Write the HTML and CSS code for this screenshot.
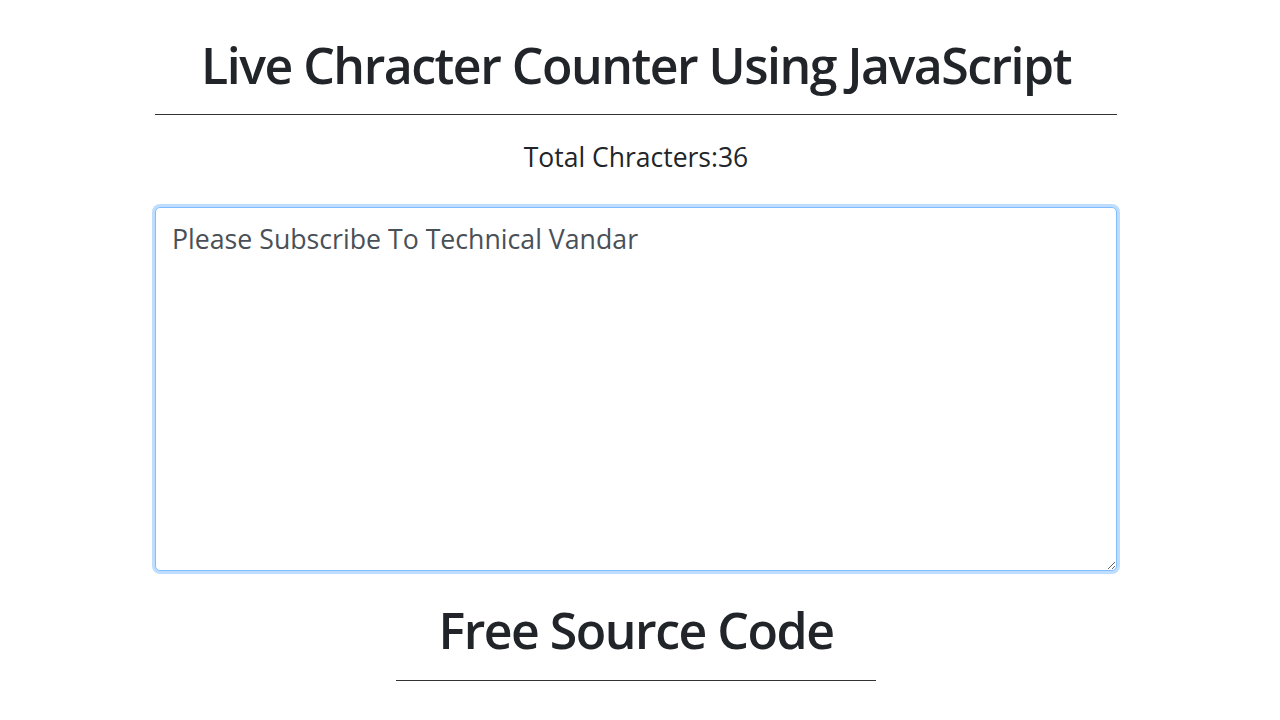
FILE: index.html
```html
<!DOCTYPE html>
<html lang="en">
<head>
  <meta charset="UTF-8" />
  <meta name="viewport" content="width=device-width, initial-scale=1" />
  <title>Live Chracter Counter</title>
  <link rel="stylesheet" href="styles.css">
</head>
<body>
  <div class="container">
    <h1 class="title">Live Chracter Counter Using JavaScript</h1>
    <hr class="rule" />
    <div id="count" class="count">Total Chracters:36</div>
    <textarea id="text" class="box" oninput="countChars()">Please Subscribe To Technical Vandar</textarea>
    <h2 class="sub">Free Source Code</h2>
    <hr class="rule short" />
  </div>

  <script>
    function countChars() {
      const text = document.getElementById("text").value;
      document.getElementById("count").textContent = `Total Chracters:${text.length}`;
    }
    countChars();
  </script>
</body>
</html>
```

FILE: styles.css
```css
body {
  margin: 0;
  padding-right: 8px;
  background: #fff;
  color: #212529;
  font-family: "Open Sans", "Noto Sans", sans-serif;
}

.container {
  width: 962px;
  margin: 0 auto;
  padding-top: 30px;
  display: flex;
  flex-direction: column;
  align-items: center;
}

.title {
  margin: 0;
  font-size: 50px;
  font-weight: 600;
  line-height: 70px;
  letter-spacing: -1.5px;
  color: #212529;
}

.rule {
  width: 100%;
  margin: 14px 0 0;
  border: none;
  border-top: 1px solid #333;
}

.rule.short {
  width: 480px;
  margin-top: 15px;
}

.count {
  margin-top: 23px;
  font-size: 26.5px;
  line-height: 38px;
}

.box {
  box-sizing: border-box;
  width: 962px;
  height: 364px;
  margin-top: 31px;
  padding: 12px 16px;
  font-family: inherit;
  font-size: 26.7px;
  line-height: 38px;
  color: #495057;
  border: 1px solid #80bdff;
  border-radius: 5px;
  box-shadow: 0 0 0 3px rgba(0, 123, 255, 0.25);
  outline: none;
  resize: vertical;
}

.sub {
  margin: 24px 0 0;
  font-size: 50px;
  font-weight: 600;
  line-height: 70px;
  letter-spacing: -1.5px;
}
```
